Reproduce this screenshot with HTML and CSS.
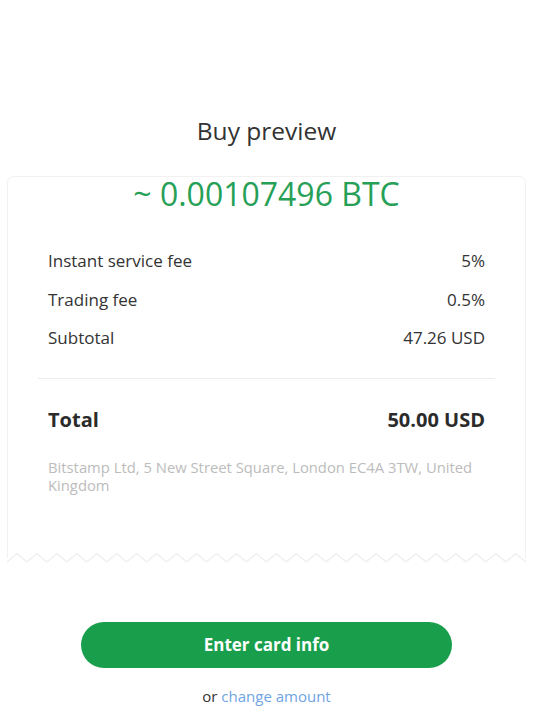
FILE: index.html
```html
<!DOCTYPE html>
<html lang="en">
<head>
    <meta charset="UTF-8">
    <meta name="viewport" content="width=device-width, initial-scale=1.0">
    <title>Buy preview</title>
    <link rel="stylesheet" href="styles.css">
</head>
<body>
    <div class="page">
        <h1 class="title">Buy preview</h1>

        <div class="receipt">
            <p class="amount">~ 0.00107496 BTC</p>

            <div class="rows">
                <div class="row"><span>Instant service fee</span><span>5%</span></div>
                <div class="row"><span>Trading fee</span><span>0.5%</span></div>
                <div class="row"><span>Subtotal</span><span>47.26 USD</span></div>
            </div>

            <hr class="divider">

            <div class="row total"><span>Total</span><span>50.00 USD</span></div>

            <p class="address">Bitstamp Ltd, 5 New Street Square, London EC4A 3TW, United Kingdom</p>

            <!-- torn paper edge -->
            <svg class="zigzag" width="519" height="12" viewBox="0 0 519 12">
                <defs>
                    <pattern id="teeth" x="0" y="0" width="19.95" height="12" patternUnits="userSpaceOnUse">
                        <path d="M0 10 L9.975 1.5 L19.95 10" fill="none" stroke="#ececec" stroke-width="1"/>
                    </pattern>
                </defs>
                <rect x="0" y="0" width="519" height="12" fill="url(#teeth)"/>
            </svg>
        </div>

        <button class="btn-primary" type="button">Enter card info</button>
        <p class="alt">or <a href="#" class="alt-link">change amount</a></p>
    </div>
</body>
</html>
```

FILE: styles.css
```css
body {
    margin: 0;
    background: #ffffff;
    font-family: "Open Sans", Arial, sans-serif;
    color: #333333;
}

.page {
    padding-top: 113px;
    text-align: center;
}

.title {
    margin: 0;
    font-size: 24.5px;
    line-height: 36px;
    font-weight: 400;
    color: #333333;
}

.receipt {
    position: relative;
    margin: 27px 7px 0;
    padding-bottom: 64px;
    border: 1px solid #f1f1f1;
    border-bottom: none;
    border-radius: 7px 7px 0 0;
    text-align: left;
}

.amount {
    margin: 0;
    font-size: 32px;
    line-height: 34px;
    color: #27a057;
    text-align: center;
}

.rows {
    margin-top: 31px;
}

.row {
    display: flex;
    justify-content: space-between;
    padding: 0 40px;
    font-size: 17px;
    line-height: 38.5px;
    color: #333333;
}

.divider {
    margin: 20px 30px 0;
    border: none;
    border-top: 1px solid #ececec;
}

.total {
    margin-top: 21px;
    font-size: 20px;
    font-weight: 700;
    line-height: 40px;
    color: #2b2b2b;
}

.address {
    margin: 18px 0 0;
    padding: 0 40px;
    font-size: 14.8px;
    line-height: 18px;
    color: #bcbcbc;
}

.zigzag {
    position: absolute;
    left: -1px;
    bottom: -6px;
    display: block;
}

.btn-primary {
    display: block;
    width: 371px;
    height: 46px;
    margin: 64px auto 0;
    border: none;
    border-radius: 23px;
    background: #199f4c;
    color: #ffffff;
    font-family: "Open Sans", Arial, sans-serif;
    font-size: 17px;
    font-weight: 700;
    cursor: pointer;
}

.alt {
    margin: 17px 0 0;
    font-size: 15px;
    line-height: 22px;
    color: #333333;
}

.alt-link {
    color: #6ea4e3;
    text-decoration: none;
}
```
